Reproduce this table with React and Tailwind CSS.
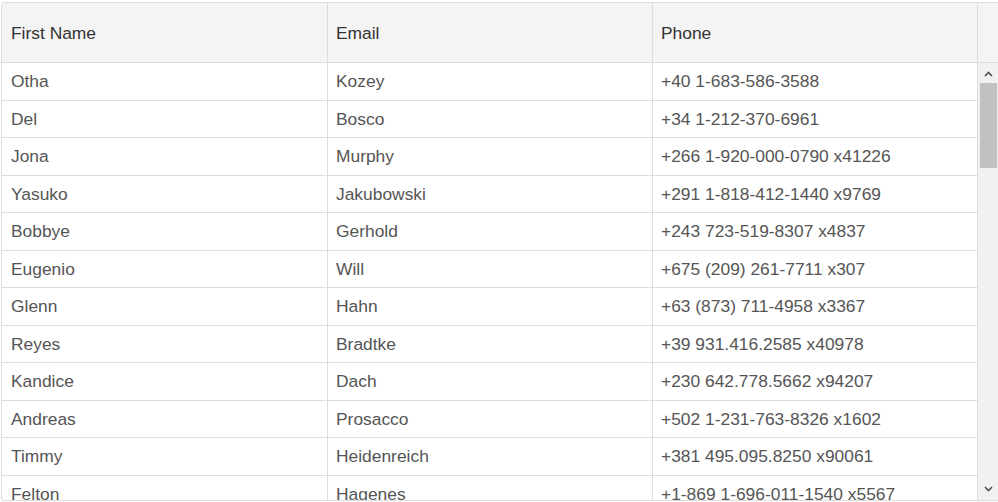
import React from 'react'

const rows = [
  ['Otha', 'Kozey', '+40 1-683-586-3588'],
  ['Del', 'Bosco', '+34 1-212-370-6961'],
  ['Jona', 'Murphy', '+266 1-920-000-0790 x41226'],
  ['Yasuko', 'Jakubowski', '+291 1-818-412-1440 x9769'],
  ['Bobbye', 'Gerhold', '+243 723-519-8307 x4837'],
  ['Eugenio', 'Will', '+675 (209) 261-7711 x307'],
  ['Glenn', 'Hahn', '+63 (873) 711-4958 x3367'],
  ['Reyes', 'Bradtke', '+39 931.416.2585 x40978'],
  ['Kandice', 'Dach', '+230 642.778.5662 x94207'],
  ['Andreas', 'Prosacco', '+502 1-231-763-8326 x1602'],
  ['Timmy', 'Heidenreich', '+381 495.095.8250 x90061'],
  ['Felton', 'Hagenes', '+1-869 1-696-011-1540 x5567'],
  ['Noel', 'Kuhn', '+44 1-555-010-2231'],
]

const cols = ['w-[326px] pl-[9px]', 'w-[325px] pl-[8px]', 'w-[325px] pl-[8px]']

export default function App() {
  return (
    <div className="pt-[2px] pl-[1px] bg-white" style={{ fontFamily: '"Liberation Sans", Arial, sans-serif' }}>
      <div className="w-[1010px] h-[499px] border border-[#dddddd] rounded-[3px] overflow-hidden flex flex-col text-[17.4px]">
        <div className="flex h-[60px] shrink-0 bg-[#f4f4f4] border-b border-[#dddddd] text-[#333333]">
          {['First Name', 'Email', 'Phone'].map((h, i) => (
            <div key={h} className={`${cols[i]} border-r border-[#dddddd] flex items-center pt-[2px]`}>
              {h}
            </div>
          ))}
          <div className="flex-1" />
        </div>
        <div className="flex flex-1 overflow-hidden">
          <div className="w-[976px] shrink-0 overflow-hidden text-[#555555]">
            {rows.map((r, ri) => (
              <div key={ri} className="flex h-[37.5px] border-b border-[#dddddd]">
                {r.map((c, i) => (
                  <div key={i} className={`${cols[i]} border-r border-[#dddddd] flex items-center whitespace-nowrap`}>
                    {c}
                  </div>
                ))}
              </div>
            ))}
          </div>
          <div className="w-[21px] shrink-0 bg-[#f1f1f1] flex flex-col items-center">
            <div className="h-[20px] w-full flex items-center justify-center pt-[2px]">
              <svg width="9" height="6" viewBox="0 0 9 6">
                <path d="M1 5 L4.5 1.5 L8 5" fill="none" stroke="#505050" strokeWidth="1.6" />
              </svg>
            </div>
            <div className="w-[17px] h-[85px] bg-[#c1c1c1]" />
            <div className="flex-1" />
            <div className="h-[20px] w-full flex items-center justify-center pb-[2px]">
              <svg width="9" height="6" viewBox="0 0 9 6">
                <path d="M1 1 L4.5 4.5 L8 1" fill="none" stroke="#505050" strokeWidth="1.6" />
              </svg>
            </div>
          </div>
        </div>
      </div>
    </div>
  )
}
